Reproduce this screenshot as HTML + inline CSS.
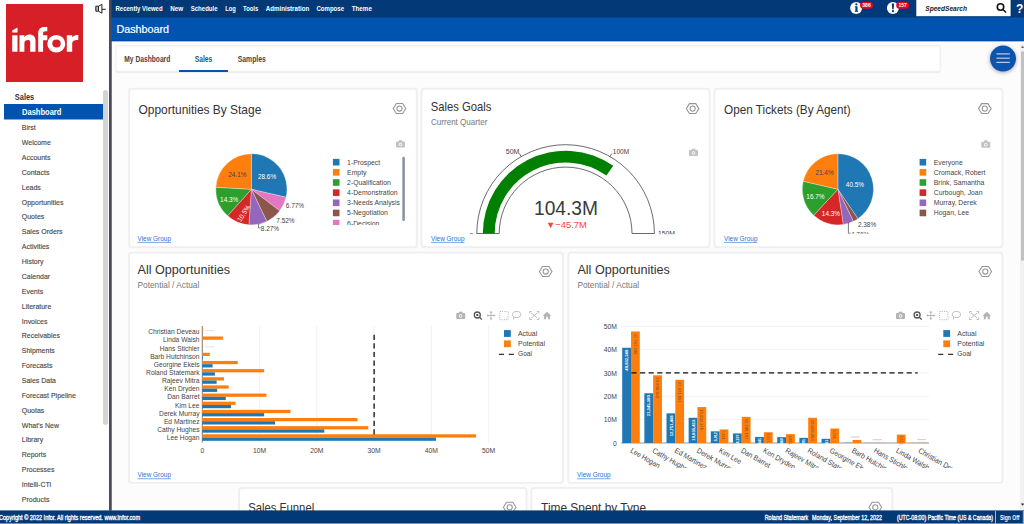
<!DOCTYPE html>
<html><head><meta charset="utf-8"><title>Dashboard</title>
<style>html,body{margin:0;padding:0;width:1024px;height:524px;overflow:hidden;background:#fcfcfc}
svg{display:block} text{font-family:"Liberation Sans", sans-serif}</style></head>
<body><svg width="1024" height="524" viewBox="0 0 1024 524" font-family='"Liberation Sans", sans-serif'>
<rect x="0" y="0" width="1024" height="524" fill="#fcfcfc" />
<rect x="0" y="0" width="109" height="510" fill="#ffffff" />
<rect x="6" y="4" width="77" height="78" fill="#d61f26" />
<g fill="#fff"><path d="M12.2,30.4 L17.5,27.5 V32.6 H12.2 Z"/><rect x="12.2" y="35.3" width="5.3" height="16.4"/><path d="M19.5,51.7 V35.3 H24.4 V37.2 C25.5,35.6 27.3,34.6 29.5,34.6 C33.2,34.6 35.5,36.8 35.5,40.8 V51.7 H30.2 V42 C30.2,40.8 29.4,40.1 28.1,40.1 C26,40.1 24.4,41.2 24.4,43 V51.7 Z"/><path d="M38.2,51.7 V33.2 C38.2,29 40.6,26.9 44.2,26.9 H47.3 V31.3 H45.2 C43.8,31.3 43.1,32 43.1,33.4 V35.3 H47.3 V40.2 H43.1 V51.7 Z"/><path fill-rule="evenodd" d="M56.3,34.9 A9,8.8 0 1 1 56.3,52.5 A9,8.8 0 1 1 56.3,34.9 Z M56.5,39.5 A4.2,4 0 1 0 56.5,47.5 A4.2,4 0 1 0 56.5,39.5 Z"/><path d="M66.8,51.7 V35.3 H72.2 V37.3 C73.2,35.8 75,34.9 77.2,34.9 H78.3 V39.9 H77 C74,39.9 72.2,41.2 72.2,43.6 V51.7 Z"/></g>
<g stroke="#222" stroke-width="1" stroke-linejoin="round"><rect x="95.8" y="6.2" width="2.7" height="5" fill="#bbb"/><path d="M98.5,6.2 L101.9,4.3 V13.2 L98.5,11.2 Z" fill="#fff"/><path d="M102,9.3 H105.8"/></g>
<text x="14.80" y="99.50" font-size="8.3" fill="#333" font-weight="bold" textLength="19.40" lengthAdjust="spacingAndGlyphs" >Sales</text>
<rect x="4" y="104" width="99" height="15.5" fill="#0054b0" />
<text x="22.00" y="115.10" font-size="8.3" fill="#ffffff" font-weight="bold" textLength="39.40" lengthAdjust="spacingAndGlyphs" >Dashboard</text>
<text x="21.80" y="130.20" font-size="7.9" fill="#4a4a4a" textLength="13.98" lengthAdjust="spacingAndGlyphs" stroke="#4a4a4a" stroke-width="0.15">Birst</text>
<text x="21.80" y="145.07" font-size="7.9" fill="#4a4a4a" textLength="29.01" lengthAdjust="spacingAndGlyphs" stroke="#4a4a4a" stroke-width="0.15">Welcome</text>
<text x="21.80" y="159.94" font-size="7.9" fill="#4a4a4a" textLength="28.76" lengthAdjust="spacingAndGlyphs" stroke="#4a4a4a" stroke-width="0.15">Accounts</text>
<text x="21.80" y="174.81" font-size="7.9" fill="#4a4a4a" textLength="27.59" lengthAdjust="spacingAndGlyphs" stroke="#4a4a4a" stroke-width="0.15">Contacts</text>
<text x="21.80" y="189.68" font-size="7.9" fill="#4a4a4a" textLength="19.05" lengthAdjust="spacingAndGlyphs" stroke="#4a4a4a" stroke-width="0.15">Leads</text>
<text x="21.80" y="204.55" font-size="7.9" fill="#4a4a4a" textLength="41.59" lengthAdjust="spacingAndGlyphs" stroke="#4a4a4a" stroke-width="0.15">Opportunities</text>
<text x="21.80" y="219.42" font-size="7.9" fill="#4a4a4a" textLength="22.54" lengthAdjust="spacingAndGlyphs" stroke="#4a4a4a" stroke-width="0.15">Quotes</text>
<text x="21.80" y="234.29" font-size="7.9" fill="#4a4a4a" textLength="40.80" lengthAdjust="spacingAndGlyphs" stroke="#4a4a4a" stroke-width="0.15">Sales Orders</text>
<text x="21.80" y="249.16" font-size="7.9" fill="#4a4a4a" textLength="27.58" lengthAdjust="spacingAndGlyphs" stroke="#4a4a4a" stroke-width="0.15">Activities</text>
<text x="21.80" y="264.03" font-size="7.9" fill="#4a4a4a" textLength="21.75" lengthAdjust="spacingAndGlyphs" stroke="#4a4a4a" stroke-width="0.15">History</text>
<text x="21.80" y="278.90" font-size="7.9" fill="#4a4a4a" textLength="28.37" lengthAdjust="spacingAndGlyphs" stroke="#4a4a4a" stroke-width="0.15">Calendar</text>
<text x="21.80" y="293.77" font-size="7.9" fill="#4a4a4a" textLength="21.37" lengthAdjust="spacingAndGlyphs" stroke="#4a4a4a" stroke-width="0.15">Events</text>
<text x="21.80" y="308.64" font-size="7.9" fill="#4a4a4a" textLength="29.54" lengthAdjust="spacingAndGlyphs" stroke="#4a4a4a" stroke-width="0.15">Literature</text>
<text x="21.80" y="323.51" font-size="7.9" fill="#4a4a4a" textLength="25.65" lengthAdjust="spacingAndGlyphs" stroke="#4a4a4a" stroke-width="0.15">Invoices</text>
<text x="21.80" y="338.38" font-size="7.9" fill="#4a4a4a" textLength="38.08" lengthAdjust="spacingAndGlyphs" stroke="#4a4a4a" stroke-width="0.15">Receivables</text>
<text x="21.80" y="353.25" font-size="7.9" fill="#4a4a4a" textLength="33.03" lengthAdjust="spacingAndGlyphs" stroke="#4a4a4a" stroke-width="0.15">Shipments</text>
<text x="21.80" y="368.12" font-size="7.9" fill="#4a4a4a" textLength="30.69" lengthAdjust="spacingAndGlyphs" stroke="#4a4a4a" stroke-width="0.15">Forecasts</text>
<text x="21.80" y="382.99" font-size="7.9" fill="#4a4a4a" textLength="34.20" lengthAdjust="spacingAndGlyphs" stroke="#4a4a4a" stroke-width="0.15">Sales Data</text>
<text x="21.80" y="397.86" font-size="7.9" fill="#4a4a4a" textLength="54.02" lengthAdjust="spacingAndGlyphs" stroke="#4a4a4a" stroke-width="0.15">Forecast Pipeline</text>
<text x="21.80" y="412.73" font-size="7.9" fill="#4a4a4a" textLength="22.54" lengthAdjust="spacingAndGlyphs" stroke="#4a4a4a" stroke-width="0.15">Quotas</text>
<text x="21.80" y="427.60" font-size="7.9" fill="#4a4a4a" textLength="37.17" lengthAdjust="spacingAndGlyphs" stroke="#4a4a4a" stroke-width="0.15">What’s New</text>
<text x="21.80" y="442.47" font-size="7.9" fill="#4a4a4a" textLength="21.37" lengthAdjust="spacingAndGlyphs" stroke="#4a4a4a" stroke-width="0.15">Library</text>
<text x="21.80" y="457.34" font-size="7.9" fill="#4a4a4a" textLength="24.48" lengthAdjust="spacingAndGlyphs" stroke="#4a4a4a" stroke-width="0.15">Reports</text>
<text x="21.80" y="472.21" font-size="7.9" fill="#4a4a4a" textLength="32.64" lengthAdjust="spacingAndGlyphs" stroke="#4a4a4a" stroke-width="0.15">Processes</text>
<text x="21.80" y="487.08" font-size="7.9" fill="#4a4a4a" textLength="29.26" lengthAdjust="spacingAndGlyphs" stroke="#4a4a4a" stroke-width="0.15">Intelli-CTi</text>
<text x="21.80" y="501.95" font-size="7.9" fill="#4a4a4a" textLength="27.59" lengthAdjust="spacingAndGlyphs" stroke="#4a4a4a" stroke-width="0.15">Products</text>
<rect x="103" y="90" width="5" height="335" rx="2.5" fill="#d4d4d4"/>
<rect x="109" y="0" width="2.5" height="510.4" fill="#4b4b55" />
<rect x="110" y="0" width="914" height="41.2" fill="#0054b0" />
<rect x="110" y="0" width="914" height="17.5" fill="#033977" />
<text x="115.50" y="10.90" font-size="7.4" fill="#ffffff" font-weight="bold" textLength="47.10" lengthAdjust="spacingAndGlyphs" >Recently Viewed</text>
<text x="170.20" y="10.90" font-size="7.4" fill="#ffffff" font-weight="bold" textLength="12.90" lengthAdjust="spacingAndGlyphs" >New</text>
<text x="190.70" y="10.90" font-size="7.4" fill="#ffffff" font-weight="bold" textLength="26.90" lengthAdjust="spacingAndGlyphs" >Schedule</text>
<text x="225.30" y="10.90" font-size="7.4" fill="#ffffff" font-weight="bold" textLength="10.50" lengthAdjust="spacingAndGlyphs" >Log</text>
<text x="243.00" y="10.90" font-size="7.4" fill="#ffffff" font-weight="bold" textLength="15.20" lengthAdjust="spacingAndGlyphs" >Tools</text>
<text x="265.80" y="10.90" font-size="7.4" fill="#ffffff" font-weight="bold" textLength="43.40" lengthAdjust="spacingAndGlyphs" >Administration</text>
<text x="316.50" y="10.90" font-size="7.4" fill="#ffffff" font-weight="bold" textLength="27.50" lengthAdjust="spacingAndGlyphs" >Compose</text>
<text x="351.70" y="10.90" font-size="7.4" fill="#ffffff" font-weight="bold" textLength="20.20" lengthAdjust="spacingAndGlyphs" >Theme</text>
<rect x="110" y="40.2" width="914" height="1" fill="#0046a8" />
<rect x="109" y="0" width="2.5" height="510.4" fill="#4b4b55" />
<text x="116.50" y="33.40" font-size="11.6" fill="#ffffff" textLength="52.60" lengthAdjust="spacingAndGlyphs" stroke="#fff" stroke-width="0.2">Dashboard</text>
<circle cx="856.15" cy="7.95" r="6" fill="#fff"/>
<g fill="#033977"><circle cx="856.4" cy="4.3" r="1.15"/><path d="M854.9,6.3 H857.5 V10.7 H858.1 V11.8 H854.8 V10.7 H855.4 V7.3 H854.9 Z"/></g>
<rect x="860.1" y="2.1" width="12.8" height="6.6" rx="3.3" fill="#e3061f"/>
<text x="866.50" y="7.30" font-size="5.3" fill="#fff" font-weight="bold" text-anchor="middle" textLength="8.50" lengthAdjust="spacingAndGlyphs" >386</text>
<circle cx="892.9" cy="7.95" r="6" fill="#fff"/>
<g fill="#033977"><path d="M891.8,3.6 H894.1 L893.7,9.3 H892.2 Z"/><circle cx="892.95" cy="11.2" r="1.15"/></g>
<rect x="896.25" y="2.1" width="12.85" height="6.6" rx="3.3" fill="#e3061f"/>
<text x="902.70" y="7.30" font-size="5.3" fill="#fff" font-weight="bold" text-anchor="middle" textLength="8.30" lengthAdjust="spacingAndGlyphs" >157</text>
<rect x="916.3" y="0" width="94.3" height="16.2" fill="#ffffff" />
<text x="925.30" y="11.00" font-size="7.6" fill="#222" font-weight="bold" font-style="italic" textLength="41.70" lengthAdjust="spacingAndGlyphs" >SpeedSearch</text>
<g fill="none" stroke="#111" stroke-width="1.6"><circle cx="1000.5" cy="7" r="3.2"/><path d="M1003 9.5 L1006 12.5"/></g>
<text x="1016.00" y="12.50" font-size="12" fill="#fff" font-weight="bold" >?</text>
<rect x="116.5" y="70.6" width="823.5" height="1.8" rx="0.9" fill="#e0e0e0"/>
<rect x="115.8" y="45.6" width="824.5" height="25.8" rx="2" fill="#fff" stroke="#efefef" stroke-width="1.2"/>
<text x="124.30" y="61.50" font-size="8.3" fill="#444" font-weight="bold" textLength="46.00" lengthAdjust="spacingAndGlyphs" >My Dashboard</text>
<text x="194.70" y="61.50" font-size="8.3" fill="#1d4f9f" font-weight="bold" textLength="17.50" lengthAdjust="spacingAndGlyphs" >Sales</text>
<text x="237.80" y="61.50" font-size="8.3" fill="#444" font-weight="bold" textLength="28.00" lengthAdjust="spacingAndGlyphs" >Samples</text>
<rect x="179" y="70" width="49" height="2" fill="#0054b0" />
<circle cx="1003" cy="58.6" r="13" fill="#0a54b0" style="filter:drop-shadow(0 1px 2px rgba(0,0,0,.35))"/>
<rect x="996.4" y="53.3" width="13.4" height="1.2" fill="#b9cdef" />
<rect x="996.4" y="57.6" width="13.4" height="1.2" fill="#b9cdef" />
<rect x="996.4" y="61.8" width="13.4" height="1.2" fill="#b9cdef" />
<rect x="1020" y="43" width="4" height="467" fill="#f1f1f1" />
<rect x="1021" y="51.5" width="3" height="209" fill="#c1c1c1" />
<path d="M1020.8,48 L1022.6,45.8 L1024.4,48 Z" fill="#777"/><path d="M1020.8,503.6 L1022.6,505.8 L1024.4,503.6 Z" fill="#333"/>
<rect x="129.1" y="88.8" width="287.70000000000005" height="158.39999999999998" rx="3" fill="#fff" stroke="#efefef" stroke-width="1.9"/>
<text x="138.50" y="113.60" font-size="13" fill="#333" textLength="122.80" lengthAdjust="spacingAndGlyphs" >Opportunities By Stage</text>
<polygon points="405.80,108.50 402.65,113.48 396.35,113.48 393.20,108.50 396.35,103.52 402.65,103.52" fill="none" stroke="#959595" stroke-width="1.05"/>
<circle cx="399.5" cy="108.5" r="2.6" fill="none" stroke="#959595" stroke-width="1.05"/>
<g fill="#c2c2c2"><rect x="396.0" y="141.5" width="9" height="6" rx="1"/><rect x="398.7" y="140.2" width="3.6" height="2"/></g><circle cx="400.5" cy="144.5" r="1.8" fill="#fff"/><circle cx="400.5" cy="144.5" r="1" fill="#c2c2c2"/>
<path d="M251.4,189.3 L251.40,153.70 A35.6,35.6 0 0 1 286.10,197.25 Z" fill="#1f77b4" stroke="#fff" stroke-width="0.3"/>
<path d="M251.4,189.3 L286.10,197.25 A35.6,35.6 0 0 1 279.74,210.85 Z" fill="#e377c2" stroke="#fff" stroke-width="0.3"/>
<path d="M251.4,189.3 L279.74,210.85 A35.6,35.6 0 0 1 266.83,221.38 Z" fill="#8c564b" stroke="#fff" stroke-width="0.3"/>
<path d="M251.4,189.3 L266.83,221.38 A35.6,35.6 0 0 1 248.88,224.81 Z" fill="#9467bd" stroke="#fff" stroke-width="0.3"/>
<path d="M251.4,189.3 L248.88,224.81 A35.6,35.6 0 0 1 227.65,215.82 Z" fill="#d62728" stroke="#fff" stroke-width="0.3"/>
<path d="M251.4,189.3 L227.65,215.82 A35.6,35.6 0 0 1 215.86,187.26 Z" fill="#2ca02c" stroke="#fff" stroke-width="0.3"/>
<path d="M251.4,189.3 L215.86,187.26 A35.6,35.6 0 0 1 251.40,153.70 Z" fill="#ff7f0e" stroke="#fff" stroke-width="0.3"/>
<text x="257.90" y="179.40" font-size="7" fill="#fff" textLength="18.26" lengthAdjust="spacingAndGlyphs" >28.6%</text>
<text x="228.20" y="177.00" font-size="7" fill="#444" textLength="18.26" lengthAdjust="spacingAndGlyphs" >24.1%</text>
<text x="220.10" y="201.70" font-size="7" fill="#fff" textLength="18.26" lengthAdjust="spacingAndGlyphs" >14.3%</text>
<g transform="translate(243.7,213.3) rotate(-57)">
<text x="0.00" y="2.40" font-size="7" fill="#fff" text-anchor="middle" textLength="18.26" lengthAdjust="spacingAndGlyphs" >10.5%</text>
</g>
<text x="285.80" y="208.20" font-size="7" fill="#444" textLength="18.26" lengthAdjust="spacingAndGlyphs" >6.77%</text>
<text x="276.30" y="222.50" font-size="7" fill="#444" textLength="18.26" lengthAdjust="spacingAndGlyphs" >7.52%</text>
<text x="260.80" y="231.40" font-size="7" fill="#444" textLength="18.26" lengthAdjust="spacingAndGlyphs" >8.27%</text>
<path d="M258.6 223.9 V227.9 H260.5" fill="none" stroke="#444" stroke-width="0.7"/>
<clipPath id="lc1"><rect x="325" y="150" width="90" height="75.1"/></clipPath><g clip-path="url(#lc1)">
<rect x="332.9" y="158.89999999999998" width="6.6" height="6.6" fill="#1f77b4" />
<text x="347.10" y="164.70" font-size="7.2" fill="#444" textLength="33.08" lengthAdjust="spacingAndGlyphs" >1-Prospect</text>
<rect x="332.9" y="169.04999999999998" width="6.6" height="6.6" fill="#ff7f0e" />
<text x="347.10" y="174.85" font-size="7.2" fill="#444" textLength="19.39" lengthAdjust="spacingAndGlyphs" >Empty</text>
<rect x="332.9" y="179.2" width="6.6" height="6.6" fill="#2ca02c" />
<text x="347.10" y="185.00" font-size="7.2" fill="#444" textLength="43.73" lengthAdjust="spacingAndGlyphs" >2-Qualification</text>
<rect x="332.9" y="189.34999999999997" width="6.6" height="6.6" fill="#d62728" />
<text x="347.10" y="195.15" font-size="7.2" fill="#444" textLength="50.57" lengthAdjust="spacingAndGlyphs" >4-Demonstration</text>
<rect x="332.9" y="199.49999999999997" width="6.6" height="6.6" fill="#9467bd" />
<text x="347.10" y="205.30" font-size="7.2" fill="#444" textLength="52.85" lengthAdjust="spacingAndGlyphs" >3-Needs Analysis</text>
<rect x="332.9" y="209.64999999999998" width="6.6" height="6.6" fill="#8c564b" />
<text x="347.10" y="215.45" font-size="7.2" fill="#444" textLength="40.69" lengthAdjust="spacingAndGlyphs" >5-Negotiation</text>
<rect x="332.9" y="219.79999999999998" width="6.6" height="6.6" fill="#e377c2" />
<text x="347.10" y="225.60" font-size="7.2" fill="#444" textLength="32.32" lengthAdjust="spacingAndGlyphs" >6-Decision</text>
</g>
<rect x="402.3" y="156.8" width="2.6" height="64.2" rx="1.3" fill="#8a92a6"/>
<text x="137.50" y="240.70" font-size="6.8" fill="#2f6fd0" textLength="33.50" lengthAdjust="spacingAndGlyphs" >View Group</text>
<rect x="137.5" y="241.89999999999998" width="33.5" height="0.8" fill="#5b8fe0" />
<rect x="421.4" y="88.8" width="288.1" height="158.39999999999998" rx="3" fill="#fff" stroke="#efefef" stroke-width="1.9"/>
<text x="430.70" y="111.00" font-size="13" fill="#333" textLength="60.80" lengthAdjust="spacingAndGlyphs" >Sales Goals</text>
<text x="431.00" y="125.00" font-size="8.4" fill="#777" textLength="56.40" lengthAdjust="spacingAndGlyphs" >Current Quarter</text>
<polygon points="698.90,108.60 695.75,113.58 689.45,113.58 686.30,108.60 689.45,103.62 695.75,103.62" fill="none" stroke="#959595" stroke-width="1.05"/>
<circle cx="692.6" cy="108.6" r="2.6" fill="none" stroke="#959595" stroke-width="1.05"/>
<g fill="#c2c2c2"><rect x="689.0" y="150.0" width="9" height="6" rx="1"/><rect x="691.7" y="148.7" width="3.6" height="2"/></g><circle cx="693.5" cy="153.0" r="1.8" fill="#fff"/><circle cx="693.5" cy="153.0" r="1" fill="#c2c2c2"/>
<clipPath id="gc"><rect x="421" y="130" width="289" height="104.3"/></clipPath><g clip-path="url(#gc)">
<path d="M476.8,233.5 A88.8,88.8 0 0 1 654.4,233.5 L632.0,233.5 A66.4,66.4 0 0 0 499.20000000000005,233.5 Z" fill="#fff" stroke="#444" stroke-width="0.8"/>
<path d="M482.8,233.5 A82.8,82.8 0 0 1 613.28,165.81 L606.43,175.54 A70.9,70.9 0 0 0 494.70000000000005,233.5 Z" fill="#008000"/>
<line x1="521.20" y1="156.60" x2="519.45" y2="153.57" stroke="#444" stroke-width="0.8"/>
<line x1="610.00" y1="156.60" x2="611.75" y2="153.57" stroke="#444" stroke-width="0.8"/>
<text x="505.80" y="153.70" font-size="6.8" fill="#444" textLength="13.70" lengthAdjust="spacingAndGlyphs" >50M</text>
<text x="612.80" y="153.70" font-size="6.8" fill="#444" textLength="16.40" lengthAdjust="spacingAndGlyphs" >100M</text>
<text x="469.50" y="237.60" font-size="6.8" fill="#444" >0</text>
<text x="658.00" y="236.40" font-size="6.8" fill="#444" textLength="17.00" lengthAdjust="spacingAndGlyphs" >150M</text>
</g>
<text x="534.00" y="215.30" font-size="20.5" fill="#3a3a3a" textLength="64.00" lengthAdjust="spacingAndGlyphs" >104.3M</text>
<text x="546.00" y="227.80" font-size="9.4" fill="#ff4136" textLength="40.80" lengthAdjust="spacingAndGlyphs" >▼−45.7M</text>
<text x="431.00" y="240.70" font-size="6.8" fill="#2f6fd0" textLength="33.50" lengthAdjust="spacingAndGlyphs" >View Group</text>
<rect x="431" y="241.89999999999998" width="33.5" height="0.8" fill="#5b8fe0" />
<rect x="714.5" y="88.8" width="288.0" height="158.39999999999998" rx="3" fill="#fff" stroke="#efefef" stroke-width="1.9"/>
<text x="724.00" y="113.60" font-size="13" fill="#333" textLength="126.80" lengthAdjust="spacingAndGlyphs" >Open Tickets (By Agent)</text>
<polygon points="991.10,108.60 987.95,113.58 981.65,113.58 978.50,108.60 981.65,103.62 987.95,103.62" fill="none" stroke="#959595" stroke-width="1.05"/>
<circle cx="984.8" cy="108.6" r="2.6" fill="none" stroke="#959595" stroke-width="1.05"/>
<g fill="#c2c2c2"><rect x="981.3" y="141.7" width="9" height="6" rx="1"/><rect x="984.0" y="140.39999999999998" width="3.6" height="2"/></g><circle cx="985.8" cy="144.7" r="1.8" fill="#fff"/><circle cx="985.8" cy="144.7" r="1" fill="#c2c2c2"/>
<path d="M837.9,189.25 L837.90,153.65 A35.6,35.6 0 0 1 857.94,218.67 Z" fill="#1f77b4" stroke="#fff" stroke-width="0.3"/>
<path d="M837.9,189.25 L857.94,218.67 A35.6,35.6 0 0 1 853.33,221.33 Z" fill="#8c564b" stroke="#fff" stroke-width="0.3"/>
<path d="M837.9,189.25 L853.33,221.33 A35.6,35.6 0 0 1 843.20,224.45 Z" fill="#9467bd" stroke="#fff" stroke-width="0.3"/>
<path d="M837.9,189.25 L843.20,224.45 A35.6,35.6 0 0 1 813.67,215.33 Z" fill="#d62728" stroke="#fff" stroke-width="0.3"/>
<path d="M837.9,189.25 L813.67,215.33 A35.6,35.6 0 0 1 803.21,181.25 Z" fill="#2ca02c" stroke="#fff" stroke-width="0.3"/>
<path d="M837.9,189.25 L803.21,181.25 A35.6,35.6 0 0 1 837.90,153.65 Z" fill="#ff7f0e" stroke="#fff" stroke-width="0.3"/>
<text x="845.80" y="187.30" font-size="7" fill="#fff" textLength="18.26" lengthAdjust="spacingAndGlyphs" >40.5%</text>
<text x="815.40" y="174.70" font-size="7" fill="#444" textLength="18.26" lengthAdjust="spacingAndGlyphs" >21.4%</text>
<text x="806.30" y="198.80" font-size="7" fill="#fff" textLength="18.26" lengthAdjust="spacingAndGlyphs" >16.7%</text>
<text x="821.80" y="216.00" font-size="7" fill="#fff" textLength="18.26" lengthAdjust="spacingAndGlyphs" >14.3%</text>
<text x="857.90" y="226.60" font-size="7" fill="#444" textLength="18.26" lengthAdjust="spacingAndGlyphs" >2.38%</text>
<clipPath id="pc3"><rect x="715" y="130" width="287" height="103.8"/></clipPath><g clip-path="url(#pc3)">
<text x="851.00" y="236.90" font-size="7" fill="#444" textLength="18.26" lengthAdjust="spacingAndGlyphs" >4.76%</text>
<path d="M848.4 222.5 V233.3 H850.5" fill="none" stroke="#444" stroke-width="0.7"/>
</g>
<rect x="919.6" y="158.89999999999998" width="6.6" height="6.6" fill="#1f77b4" />
<text x="933.80" y="164.70" font-size="7.2" fill="#444" textLength="28.90" lengthAdjust="spacingAndGlyphs" >Everyone</text>
<rect x="919.6" y="169.04999999999998" width="6.6" height="6.6" fill="#ff7f0e" />
<text x="933.80" y="174.85" font-size="7.2" fill="#444" textLength="51.70" lengthAdjust="spacingAndGlyphs" >Cromack, Robert</text>
<rect x="919.6" y="179.2" width="6.6" height="6.6" fill="#2ca02c" />
<text x="933.80" y="185.00" font-size="7.2" fill="#444" textLength="50.57" lengthAdjust="spacingAndGlyphs" >Brink, Samantha</text>
<rect x="919.6" y="189.34999999999997" width="6.6" height="6.6" fill="#d62728" />
<text x="933.80" y="195.15" font-size="7.2" fill="#444" textLength="48.68" lengthAdjust="spacingAndGlyphs" >Curbough, Joan</text>
<rect x="919.6" y="199.49999999999997" width="6.6" height="6.6" fill="#9467bd" />
<text x="933.80" y="205.30" font-size="7.2" fill="#444" textLength="42.82" lengthAdjust="spacingAndGlyphs" >Murray, Derek</text>
<rect x="919.6" y="209.64999999999998" width="6.6" height="6.6" fill="#8c564b" />
<text x="933.80" y="215.45" font-size="7.2" fill="#444" textLength="35.37" lengthAdjust="spacingAndGlyphs" >Hogan, Lee</text>
<text x="724.00" y="240.70" font-size="6.8" fill="#2f6fd0" textLength="33.50" lengthAdjust="spacingAndGlyphs" >View Group</text>
<rect x="724" y="241.89999999999998" width="33.5" height="0.8" fill="#5b8fe0" />
<rect x="129.0" y="252.5" width="434.0" height="230.39999999999998" rx="3" fill="#fff" stroke="#efefef" stroke-width="1.9"/>
<text x="137.50" y="273.90" font-size="13" fill="#333" textLength="92.50" lengthAdjust="spacingAndGlyphs" >All Opportunities</text>
<text x="137.50" y="288.30" font-size="8.4" fill="#777" textLength="61.80" lengthAdjust="spacingAndGlyphs" >Potential / Actual</text>
<polygon points="552.00,271.50 548.85,276.48 542.55,276.48 539.40,271.50 542.55,266.52 548.85,266.52" fill="none" stroke="#959595" stroke-width="1.05"/>
<circle cx="545.7" cy="271.5" r="2.6" fill="none" stroke="#959595" stroke-width="1.05"/>
<text x="137.50" y="477.20" font-size="6.8" fill="#2f6fd0" textLength="33.50" lengthAdjust="spacingAndGlyphs" >View Group</text>
<rect x="137.5" y="478.4" width="33.5" height="0.8" fill="#5b8fe0" />
<g fill="#b4b4b4"><rect x="456.2" y="313.0" width="9" height="6" rx="1"/><rect x="458.9" y="311.7" width="3.6" height="2"/></g><circle cx="460.7" cy="316.0" r="1.8" fill="#fff"/><circle cx="460.7" cy="316.0" r="1" fill="#b4b4b4"/>
<g fill="none" stroke="#555" stroke-width="1.3"><circle cx="477.3" cy="315.0" r="3"/><path d="M479.5,317.2 L481.90000000000003,319.6"/></g><rect x="476.3" y="314.0" width="2" height="2" fill="#555"/>
<g fill="none" stroke="#b4b4b4" stroke-width="0.9"><path d="M487,315.5 H495 M491,311.5 V319.5"/></g><g fill="#b4b4b4"><path d="M486.5,315.5 l1.8,-1.5 v3 Z M495.5,315.5 l-1.8,-1.5 v3 Z M491,311.0 l-1.5,1.8 h3 Z M491,320.0 l-1.5,-1.8 h3 Z"/></g>
<rect x="499.8" y="311.5" width="8.4" height="8.2" fill="none" stroke="#b4b4b4" stroke-width="0.9" stroke-dasharray="1.1 1.1"/>
<g fill="none" stroke="#b4b4b4" stroke-width="0.9"><ellipse cx="516.6" cy="314.5" rx="4.1" ry="3"/><path d="M514.1,317.0 L513.4,319.5"/></g>
<g fill="none" stroke="#b4b4b4" stroke-width="0.9"><path d="M529.8,313.5 V311.5 H531.8 M536.8,311.5 H538.8 V313.5 M538.8,317.5 V319.5 H536.8 M531.8,319.5 H529.8 V317.5"/><path d="M531.3,313.0 L537.3,318.0 M537.3,313.0 L531.3,318.0"/></g>
<path d="M542.7,315.8 L547,311.7 L551.3,315.8 H550 V319.3 H547.9 V316.8 H546.1 V319.3 H544 V315.8 Z" fill="#b4b4b4"/>
<line x1="259.6" y1="326" x2="259.6" y2="442.5" stroke="#eee" stroke-width="0.8"/>
<line x1="316.8" y1="326" x2="316.8" y2="442.5" stroke="#eee" stroke-width="0.8"/>
<line x1="374.1" y1="326" x2="374.1" y2="442.5" stroke="#eee" stroke-width="0.8"/>
<line x1="431.4" y1="326" x2="431.4" y2="442.5" stroke="#eee" stroke-width="0.8"/>
<line x1="488.7" y1="326" x2="488.7" y2="442.5" stroke="#eee" stroke-width="0.8"/>
<line x1="202.3" y1="325.9" x2="202.3" y2="442.5" stroke="#444" stroke-width="0.7"/>
<rect x="202.3" y="328.34" width="0.86" height="3.26" fill="#ff7f0e"/>
<rect x="202.3" y="331.60" width="0.17" height="3.26" fill="#1f77b4"/>
<text x="199.50" y="334.20" font-size="7.5" fill="#444" text-anchor="end" textLength="51.20" lengthAdjust="spacingAndGlyphs" >Christian Deveau</text>
<rect x="202.3" y="336.49" width="20.62" height="3.26" fill="#ff7f0e"/>
<rect x="202.3" y="339.75" width="0.00" height="3.26" fill="#1f77b4"/>
<text x="199.50" y="342.35" font-size="7.5" fill="#444" text-anchor="end" textLength="36.49" lengthAdjust="spacingAndGlyphs" >Linda Walsh</text>
<rect x="202.3" y="344.64" width="0.57" height="3.26" fill="#ff7f0e"/>
<rect x="202.3" y="347.90" width="0.17" height="3.26" fill="#1f77b4"/>
<text x="199.50" y="350.50" font-size="7.5" fill="#444" text-anchor="end" textLength="39.70" lengthAdjust="spacingAndGlyphs" >Hans Stichler</text>
<rect x="202.3" y="352.79" width="7.45" height="3.26" fill="#ff7f0e"/>
<rect x="202.3" y="356.05" width="0.57" height="3.26" fill="#1f77b4"/>
<text x="199.50" y="358.65" font-size="7.5" fill="#444" text-anchor="end" textLength="49.35" lengthAdjust="spacingAndGlyphs" >Barb Hutchinson</text>
<rect x="202.3" y="360.94" width="35.51" height="3.26" fill="#ff7f0e"/>
<rect x="202.3" y="364.20" width="10.31" height="3.26" fill="#1f77b4"/>
<text x="199.50" y="366.80" font-size="7.5" fill="#444" text-anchor="end" textLength="45.64" lengthAdjust="spacingAndGlyphs" >Georgine Ekels</text>
<rect x="202.3" y="369.09" width="61.85" height="3.26" fill="#ff7f0e"/>
<rect x="202.3" y="372.35" width="12.60" height="3.26" fill="#1f77b4"/>
<text x="199.50" y="374.95" font-size="7.5" fill="#444" text-anchor="end" textLength="53.43" lengthAdjust="spacingAndGlyphs" >Roland Statemark</text>
<rect x="202.3" y="377.24" width="21.76" height="3.26" fill="#ff7f0e"/>
<rect x="202.3" y="380.50" width="14.32" height="3.26" fill="#1f77b4"/>
<text x="199.50" y="383.10" font-size="7.5" fill="#444" text-anchor="end" textLength="37.47" lengthAdjust="spacingAndGlyphs" >Rajeev Mitra</text>
<rect x="202.3" y="385.39" width="26.34" height="3.26" fill="#ff7f0e"/>
<rect x="202.3" y="388.65" width="14.89" height="3.26" fill="#1f77b4"/>
<text x="199.50" y="391.25" font-size="7.5" fill="#444" text-anchor="end" textLength="35.25" lengthAdjust="spacingAndGlyphs" >Ken Dryden</text>
<rect x="202.3" y="393.54" width="64.14" height="3.26" fill="#ff7f0e"/>
<rect x="202.3" y="396.80" width="23.48" height="3.26" fill="#1f77b4"/>
<text x="199.50" y="399.40" font-size="7.5" fill="#444" text-anchor="end" textLength="32.28" lengthAdjust="spacingAndGlyphs" >Dan Barret</text>
<rect x="202.3" y="401.69" width="33.22" height="3.26" fill="#ff7f0e"/>
<rect x="202.3" y="404.95" width="28.64" height="3.26" fill="#1f77b4"/>
<text x="199.50" y="407.55" font-size="7.5" fill="#444" text-anchor="end" textLength="24.49" lengthAdjust="spacingAndGlyphs" >Kim Lee</text>
<rect x="202.3" y="409.84" width="88.20" height="3.26" fill="#ff7f0e"/>
<rect x="202.3" y="413.10" width="61.85" height="3.26" fill="#1f77b4"/>
<text x="199.50" y="415.70" font-size="7.5" fill="#444" text-anchor="end" textLength="40.43" lengthAdjust="spacingAndGlyphs" >Derek Murray</text>
<rect x="202.3" y="417.99" width="155.20" height="3.26" fill="#ff7f0e"/>
<rect x="202.3" y="421.25" width="72.73" height="3.26" fill="#1f77b4"/>
<text x="199.50" y="423.85" font-size="7.5" fill="#444" text-anchor="end" textLength="35.62" lengthAdjust="spacingAndGlyphs" >Ed Martinez</text>
<rect x="202.3" y="426.14" width="166.08" height="3.26" fill="#ff7f0e"/>
<rect x="202.3" y="429.40" width="121.99" height="3.26" fill="#1f77b4"/>
<text x="199.50" y="432.00" font-size="7.5" fill="#444" text-anchor="end" textLength="42.30" lengthAdjust="spacingAndGlyphs" >Cathy Hughes</text>
<rect x="202.3" y="434.29" width="273.75" height="3.26" fill="#ff7f0e"/>
<rect x="202.3" y="437.55" width="233.66" height="3.26" fill="#1f77b4"/>
<text x="199.50" y="440.15" font-size="7.5" fill="#444" text-anchor="end" textLength="32.67" lengthAdjust="spacingAndGlyphs" >Lee Hogan</text>
<rect x="205.3" y="330.0" width="9" height="1" fill="#e2e2e2"/>
<rect x="205.3" y="346.3" width="9" height="1" fill="#e2e2e2"/>
<line x1="374.1" y1="334.7" x2="374.1" y2="438" stroke="#111" stroke-width="1.3" stroke-dasharray="5.2 3.4"/>
<text x="202.30" y="452.90" font-size="7.5" fill="#444" text-anchor="middle" textLength="3.75" lengthAdjust="spacingAndGlyphs" >0</text>
<text x="259.57" y="452.90" font-size="7.5" fill="#444" text-anchor="middle" textLength="13.13" lengthAdjust="spacingAndGlyphs" >10M</text>
<text x="316.84" y="452.90" font-size="7.5" fill="#444" text-anchor="middle" textLength="13.13" lengthAdjust="spacingAndGlyphs" >20M</text>
<text x="374.11" y="452.90" font-size="7.5" fill="#444" text-anchor="middle" textLength="13.13" lengthAdjust="spacingAndGlyphs" >30M</text>
<text x="431.38" y="452.90" font-size="7.5" fill="#444" text-anchor="middle" textLength="13.13" lengthAdjust="spacingAndGlyphs" >40M</text>
<text x="488.65" y="452.90" font-size="7.5" fill="#444" text-anchor="middle" textLength="13.13" lengthAdjust="spacingAndGlyphs" >50M</text>
<rect x="504" y="330.1" width="6.8" height="6.8" fill="#1f77b4" />
<text x="518.00" y="335.90" font-size="7.5" fill="#444" textLength="19.20" lengthAdjust="spacingAndGlyphs" >Actual</text>
<rect x="504" y="340.4" width="6.8" height="6.8" fill="#ff7f0e" />
<text x="518.00" y="345.90" font-size="7.5" fill="#444" textLength="27.00" lengthAdjust="spacingAndGlyphs" >Potential</text>
<line x1="498.9" y1="354.4" x2="513.9" y2="354.4" stroke="#333" stroke-width="1.4" stroke-dasharray="5.1 4.8"/>
<text x="518.00" y="356.40" font-size="7.5" fill="#444" textLength="14.00" lengthAdjust="spacingAndGlyphs" >Goal</text>
<rect x="568.3" y="252.5" width="434.20000000000005" height="230.39999999999998" rx="3" fill="#fff" stroke="#efefef" stroke-width="1.9"/>
<text x="577.40" y="273.90" font-size="13" fill="#333" textLength="92.50" lengthAdjust="spacingAndGlyphs" >All Opportunities</text>
<text x="577.40" y="288.30" font-size="8.4" fill="#777" textLength="61.80" lengthAdjust="spacingAndGlyphs" >Potential / Actual</text>
<polygon points="991.60,271.50 988.45,276.48 982.15,276.48 979.00,271.50 982.15,266.52 988.45,266.52" fill="none" stroke="#959595" stroke-width="1.05"/>
<circle cx="985.3" cy="271.5" r="2.6" fill="none" stroke="#959595" stroke-width="1.05"/>
<text x="577.10" y="477.20" font-size="6.8" fill="#2f6fd0" textLength="33.50" lengthAdjust="spacingAndGlyphs" >View Group</text>
<rect x="577.1" y="478.4" width="33.5" height="0.8" fill="#5b8fe0" />
<g fill="#b4b4b4"><rect x="896.0" y="313.0" width="9" height="6" rx="1"/><rect x="898.7" y="311.7" width="3.6" height="2"/></g><circle cx="900.5" cy="316.0" r="1.8" fill="#fff"/><circle cx="900.5" cy="316.0" r="1" fill="#b4b4b4"/>
<g fill="none" stroke="#555" stroke-width="1.3"><circle cx="917.0999999999999" cy="315.0" r="3"/><path d="M919.3,317.2 L921.6999999999999,319.6"/></g><rect x="916.0999999999999" y="314.0" width="2" height="2" fill="#555"/>
<g fill="none" stroke="#b4b4b4" stroke-width="0.9"><path d="M926.8,315.5 H934.8 M930.8,311.5 V319.5"/></g><g fill="#b4b4b4"><path d="M926.3,315.5 l1.8,-1.5 v3 Z M935.3,315.5 l-1.8,-1.5 v3 Z M930.8,311.0 l-1.5,1.8 h3 Z M930.8,320.0 l-1.5,-1.8 h3 Z"/></g>
<rect x="939.5999999999999" y="311.5" width="8.4" height="8.2" fill="none" stroke="#b4b4b4" stroke-width="0.9" stroke-dasharray="1.1 1.1"/>
<g fill="none" stroke="#b4b4b4" stroke-width="0.9"><ellipse cx="956.4" cy="314.5" rx="4.1" ry="3"/><path d="M953.9,317.0 L953.1999999999999,319.5"/></g>
<g fill="none" stroke="#b4b4b4" stroke-width="0.9"><path d="M969.6,313.5 V311.5 H971.6 M976.6,311.5 H978.6 V313.5 M978.6,317.5 V319.5 H976.6 M971.6,319.5 H969.6 V317.5"/><path d="M971.1,313.0 L977.1,318.0 M977.1,313.0 L971.1,318.0"/></g>
<path d="M982.5,315.8 L986.8,311.7 L991.0999999999999,315.8 H989.8 V319.3 H987.6999999999999 V316.8 H985.9 V319.3 H983.8 V315.8 Z" fill="#b4b4b4"/>
<text x="616.80" y="445.60" font-size="7.5" fill="#444" text-anchor="end" textLength="3.75" lengthAdjust="spacingAndGlyphs" >0</text>
<line x1="621" y1="419.7" x2="929" y2="419.7" stroke="#eee" stroke-width="0.8"/>
<text x="616.80" y="422.26" font-size="7.5" fill="#444" text-anchor="end" textLength="13.13" lengthAdjust="spacingAndGlyphs" >10M</text>
<line x1="621" y1="396.3" x2="929" y2="396.3" stroke="#eee" stroke-width="0.8"/>
<text x="616.80" y="398.92" font-size="7.5" fill="#444" text-anchor="end" textLength="13.13" lengthAdjust="spacingAndGlyphs" >20M</text>
<line x1="621" y1="373.0" x2="929" y2="373.0" stroke="#eee" stroke-width="0.8"/>
<text x="616.80" y="375.58" font-size="7.5" fill="#444" text-anchor="end" textLength="13.13" lengthAdjust="spacingAndGlyphs" >30M</text>
<line x1="621" y1="349.6" x2="929" y2="349.6" stroke="#eee" stroke-width="0.8"/>
<text x="616.80" y="352.24" font-size="7.5" fill="#444" text-anchor="end" textLength="13.13" lengthAdjust="spacingAndGlyphs" >40M</text>
<line x1="621" y1="326.3" x2="929" y2="326.3" stroke="#eee" stroke-width="0.8"/>
<text x="616.80" y="328.90" font-size="7.5" fill="#444" text-anchor="end" textLength="13.13" lengthAdjust="spacingAndGlyphs" >50M</text>
<line x1="621" y1="443.0" x2="929" y2="443.0" stroke="#999" stroke-width="1.2"/>
<clipPath id="xc5"><rect x="569" y="444" width="433" height="24"/></clipPath>
<rect x="622.20" y="347.77" width="8.8" height="95.23" fill="#1f77b4"/>
<rect x="631.00" y="331.43" width="8.8" height="111.57" fill="#ff7f0e"/>
<g transform="translate(628.20,349.77) rotate(-90)">
<text x="0.00" y="0.00" font-size="4.4" fill="#fff" font-weight="bold" text-anchor="end" textLength="20.92" lengthAdjust="spacingAndGlyphs" >40,832,248</text>
</g>
<g transform="translate(633.80,333.43) rotate(90)">
<text x="0.00" y="0.00" font-size="4.4" fill="#7a4a18" textLength="20.92" lengthAdjust="spacingAndGlyphs" >47,767,308</text>
</g>
<g clip-path="url(#xc5)"><g transform="translate(632.4,447.3) rotate(30)">
<text x="0.00" y="5.40" font-size="7.5" fill="#444" textLength="33.03" lengthAdjust="spacingAndGlyphs" >Lee Hogan</text>
</g></g>
<rect x="644.35" y="393.29" width="8.8" height="49.71" fill="#1f77b4"/>
<rect x="653.15" y="375.31" width="8.8" height="67.69" fill="#ff7f0e"/>
<g transform="translate(650.35,395.29) rotate(-90)">
<text x="0.00" y="0.00" font-size="4.4" fill="#fff" font-weight="bold" text-anchor="end" textLength="20.92" lengthAdjust="spacingAndGlyphs" >21,345,380</text>
</g>
<g transform="translate(655.95,377.31) rotate(90)">
<text x="0.00" y="0.00" font-size="4.4" fill="#7a4a18" textLength="20.92" lengthAdjust="spacingAndGlyphs" >29,036,342</text>
</g>
<g clip-path="url(#xc5)"><g transform="translate(654.5,447.3) rotate(30)">
<text x="0.00" y="5.40" font-size="7.5" fill="#444" textLength="42.78" lengthAdjust="spacingAndGlyphs" >Cathy Hughes</text>
</g></g>
<rect x="666.50" y="413.36" width="8.8" height="29.64" fill="#1f77b4"/>
<rect x="675.30" y="379.75" width="8.8" height="63.25" fill="#ff7f0e"/>
<g transform="translate(672.50,415.36) rotate(-90)">
<text x="0.00" y="0.00" font-size="4.4" fill="#fff" font-weight="bold" text-anchor="end" textLength="20.92" lengthAdjust="spacingAndGlyphs" >12,751,468</text>
</g>
<g transform="translate(678.10,381.75) rotate(90)">
<text x="0.00" y="0.00" font-size="4.4" fill="#7a4a18" textLength="20.92" lengthAdjust="spacingAndGlyphs" >27,071,557</text>
</g>
<g clip-path="url(#xc5)"><g transform="translate(676.7,447.3) rotate(30)">
<text x="0.00" y="5.40" font-size="7.5" fill="#444" textLength="36.02" lengthAdjust="spacingAndGlyphs" >Ed Martinez</text>
</g></g>
<rect x="688.65" y="417.79" width="8.8" height="25.21" fill="#1f77b4"/>
<rect x="697.45" y="407.06" width="8.8" height="35.94" fill="#ff7f0e"/>
<g transform="translate(694.65,419.79) rotate(-90)">
<text x="0.00" y="0.00" font-size="4.4" fill="#fff" font-weight="bold" text-anchor="end" textLength="20.92" lengthAdjust="spacingAndGlyphs" >10,835,423</text>
</g>
<g transform="translate(700.25,409.06) rotate(90)">
<text x="0.00" y="0.00" font-size="4.4" fill="#7a4a18" textLength="20.92" lengthAdjust="spacingAndGlyphs" >15,404,375</text>
</g>
<g clip-path="url(#xc5)"><g transform="translate(698.9,447.3) rotate(30)">
<text x="0.00" y="5.40" font-size="7.5" fill="#444" textLength="40.88" lengthAdjust="spacingAndGlyphs" >Derek Murray</text>
</g></g>
<rect x="710.80" y="431.33" width="8.8" height="11.67" fill="#1f77b4"/>
<rect x="719.60" y="429.46" width="8.8" height="13.54" fill="#ff7f0e"/>
<g transform="translate(716.80,432.33) rotate(-90)">
<text x="0.00" y="0.00" font-size="3.6" fill="#fff" font-weight="bold" text-anchor="end" >5,012</text>
</g>
<g transform="translate(722.40,430.46) rotate(90)">
<text x="0.00" y="0.00" font-size="3.6" fill="#7a4a18" >5,814,</text>
</g>
<g clip-path="url(#xc5)"><g transform="translate(721.0,447.3) rotate(30)">
<text x="0.00" y="5.40" font-size="7.5" fill="#444" textLength="24.76" lengthAdjust="spacingAndGlyphs" >Kim Lee</text>
</g></g>
<rect x="732.95" y="433.43" width="8.8" height="9.57" fill="#1f77b4"/>
<rect x="741.75" y="416.86" width="8.8" height="26.14" fill="#ff7f0e"/>
<g transform="translate(738.95,434.43) rotate(-90)">
<text x="0.00" y="0.00" font-size="3.6" fill="#fff" font-weight="bold" text-anchor="end" >4,107</text>
</g>
<g transform="translate(744.55,418.86) rotate(90)">
<text x="0.00" y="0.00" font-size="4.4" fill="#7a4a18" textLength="20.61" lengthAdjust="spacingAndGlyphs" >11,205,197</text>
</g>
<g clip-path="url(#xc5)"><g transform="translate(743.1,447.3) rotate(30)">
<text x="0.00" y="5.40" font-size="7.5" fill="#444" textLength="32.64" lengthAdjust="spacingAndGlyphs" >Dan Barret</text>
</g></g>
<rect x="755.10" y="436.93" width="8.8" height="6.07" fill="#1f77b4"/>
<rect x="763.90" y="432.26" width="8.8" height="10.74" fill="#ff7f0e"/>
<g transform="translate(761.10,437.93) rotate(-90)">
<text x="0.00" y="0.00" font-size="3.6" fill="#fff" font-weight="bold" text-anchor="end" >2,641</text>
</g>
<g transform="translate(766.70,433.26) rotate(90)">
<text x="0.00" y="0.00" font-size="3.6" fill="#7a4a18" >4,617,</text>
</g>
<g clip-path="url(#xc5)"><g transform="translate(765.3,447.3) rotate(30)">
<text x="0.00" y="5.40" font-size="7.5" fill="#444" textLength="35.65" lengthAdjust="spacingAndGlyphs" >Ken Dryden</text>
</g></g>
<rect x="777.25" y="437.17" width="8.8" height="5.83" fill="#1f77b4"/>
<rect x="786.05" y="434.13" width="8.8" height="8.87" fill="#ff7f0e"/>
<g transform="translate(783.25,438.17) rotate(-90)">
<text x="0.00" y="0.00" font-size="3.6" fill="#fff" font-weight="bold" text-anchor="end" >2,480</text>
</g>
<g transform="translate(788.85,435.13) rotate(90)">
<text x="0.00" y="0.00" font-size="3.6" fill="#7a4a18" >3,801,</text>
</g>
<g clip-path="url(#xc5)"><g transform="translate(787.4,447.3) rotate(30)">
<text x="0.00" y="5.40" font-size="7.5" fill="#444" textLength="37.89" lengthAdjust="spacingAndGlyphs" >Rajeev Mitra</text>
</g></g>
<rect x="799.40" y="437.87" width="8.8" height="5.13" fill="#1f77b4"/>
<rect x="808.20" y="417.79" width="8.8" height="25.21" fill="#ff7f0e"/>
<g transform="translate(805.40,438.87) rotate(-90)">
<text x="0.00" y="0.00" font-size="3.6" fill="#fff" font-weight="bold" text-anchor="end" >2,191</text>
</g>
<g transform="translate(811.00,419.79) rotate(90)">
<text x="0.00" y="0.00" font-size="4.4" fill="#7a4a18" textLength="20.92" lengthAdjust="spacingAndGlyphs" >10,803,154</text>
</g>
<g clip-path="url(#xc5)"><g transform="translate(809.6,447.3) rotate(30)">
<text x="0.00" y="5.40" font-size="7.5" fill="#444" textLength="54.03" lengthAdjust="spacingAndGlyphs" >Roland Statemark</text>
</g></g>
<rect x="821.55" y="438.80" width="8.8" height="4.20" fill="#1f77b4"/>
<rect x="830.35" y="428.53" width="8.8" height="14.47" fill="#ff7f0e"/>
<g transform="translate(827.55,439.80) rotate(-90)">
<text x="0.00" y="0.00" font-size="3.6" fill="#fff" font-weight="bold" text-anchor="end" >1,781</text>
</g>
<g transform="translate(833.15,429.53) rotate(90)">
<text x="0.00" y="0.00" font-size="3.6" fill="#7a4a18" >6,214,</text>
</g>
<g clip-path="url(#xc5)"><g transform="translate(831.8,447.3) rotate(30)">
<text x="0.00" y="5.40" font-size="7.5" fill="#444" textLength="46.15" lengthAdjust="spacingAndGlyphs" >Georgine Ekels</text>
</g></g>
<rect x="843.70" y="442.77" width="8.8" height="0.23" fill="#1f77b4"/>
<rect x="852.50" y="439.97" width="8.8" height="3.03" fill="#ff7f0e"/>
<rect x="850.5" y="436.47" width="9" height="1" fill="#ccc"/>
<g clip-path="url(#xc5)"><g transform="translate(853.9,447.3) rotate(30)">
<text x="0.00" y="5.40" font-size="7.5" fill="#444" textLength="49.91" lengthAdjust="spacingAndGlyphs" >Barb Hutchinson</text>
</g></g>
<rect x="865.85" y="442.93" width="8.8" height="0.07" fill="#1f77b4"/>
<rect x="874.65" y="442.77" width="8.8" height="0.23" fill="#ff7f0e"/>
<rect x="872.65" y="439.27" width="9" height="1" fill="#ccc"/>
<g clip-path="url(#xc5)"><g transform="translate(876.0,447.3) rotate(30)">
<text x="0.00" y="5.40" font-size="7.5" fill="#444" textLength="40.14" lengthAdjust="spacingAndGlyphs" >Hans Stichler</text>
</g></g>
<rect x="888.00" y="443.00" width="8.8" height="0.00" fill="#1f77b4"/>
<rect x="896.80" y="434.60" width="8.8" height="8.40" fill="#ff7f0e"/>
<g transform="translate(899.60,435.60) rotate(90)">
<text x="0.00" y="0.00" font-size="3.6" fill="#7a4a18" >3,612,</text>
</g>
<g clip-path="url(#xc5)"><g transform="translate(898.2,447.3) rotate(30)">
<text x="0.00" y="5.40" font-size="7.5" fill="#444" textLength="36.90" lengthAdjust="spacingAndGlyphs" >Linda Walsh</text>
</g></g>
<rect x="910.15" y="442.93" width="8.8" height="0.07" fill="#1f77b4"/>
<rect x="918.95" y="442.65" width="8.8" height="0.35" fill="#ff7f0e"/>
<rect x="916.95" y="439.15" width="9" height="1" fill="#ccc"/>
<g clip-path="url(#xc5)"><g transform="translate(920.4,447.3) rotate(30)">
<text x="0.00" y="5.40" font-size="7.5" fill="#444" textLength="51.78" lengthAdjust="spacingAndGlyphs" >Christian Deveau</text>
</g></g>
<line x1="631.4" y1="372.9" x2="917.7" y2="372.9" stroke="#111" stroke-width="1.3" stroke-dasharray="5.2 3.4"/>
<rect x="943.3" y="330.1" width="6.8" height="6.8" fill="#1f77b4" />
<text x="957.30" y="335.90" font-size="7.5" fill="#444" textLength="19.20" lengthAdjust="spacingAndGlyphs" >Actual</text>
<rect x="943.3" y="340.4" width="6.8" height="6.8" fill="#ff7f0e" />
<text x="957.30" y="345.90" font-size="7.5" fill="#444" textLength="27.00" lengthAdjust="spacingAndGlyphs" >Potential</text>
<line x1="938.1999999999999" y1="354.4" x2="953.1999999999999" y2="354.4" stroke="#333" stroke-width="1.4" stroke-dasharray="5.1 4.8"/>
<text x="957.30" y="356.40" font-size="7.5" fill="#444" textLength="14.00" lengthAdjust="spacingAndGlyphs" >Goal</text>
<rect x="239" y="488" width="287.5" height="52" rx="3" fill="#fff" stroke="#efefef" stroke-width="1.9"/>
<text x="248.20" y="511.90" font-size="13" fill="#333" textLength="66.00" lengthAdjust="spacingAndGlyphs" >Sales Funnel</text>
<polygon points="516.00,507.30 512.85,512.28 506.55,512.28 503.40,507.30 506.55,502.32 512.85,502.32" fill="none" stroke="#959595" stroke-width="1.05"/>
<circle cx="509.7" cy="507.3" r="2.6" fill="none" stroke="#959595" stroke-width="1.05"/>
<rect x="531.4" y="488" width="360.9" height="52" rx="3" fill="#fff" stroke="#efefef" stroke-width="1.9"/>
<text x="541.10" y="511.90" font-size="13" fill="#333" textLength="105.00" lengthAdjust="spacingAndGlyphs" >Time Spent by Type</text>
<polygon points="881.60,507.30 878.45,512.28 872.15,512.28 869.00,507.30 872.15,502.32 878.45,502.32" fill="none" stroke="#959595" stroke-width="1.05"/>
<circle cx="875.3" cy="507.3" r="2.6" fill="none" stroke="#959595" stroke-width="1.05"/>
<rect x="0" y="510.4" width="1024" height="12.6" fill="#033977" />
<rect x="0" y="523" width="1024" height="1" fill="#7d93b5" />
<text x="-1.00" y="519.60" font-size="6.4" fill="#fff" textLength="141.00" lengthAdjust="spacingAndGlyphs" stroke="#fff" stroke-width="0.3">Copyright © 2022 Infor. All rights reserved. www.infor.com</text>
<text x="764.70" y="519.60" font-size="6.4" fill="#fff" textLength="43.60" lengthAdjust="spacingAndGlyphs" stroke="#fff" stroke-width="0.3">Roland Statemark</text>
<text x="812.00" y="519.60" font-size="6.4" fill="#fff" textLength="70.00" lengthAdjust="spacingAndGlyphs" stroke="#fff" stroke-width="0.3">Monday, September 12, 2022</text>
<text x="897.00" y="519.60" font-size="6.4" fill="#fff" textLength="96.00" lengthAdjust="spacingAndGlyphs" stroke="#fff" stroke-width="0.3">(UTC-08:00) Pacific Time (US &amp; Canada)</text>
<rect x="995.2" y="511" width="0.8" height="12" fill="#d0d8e6" />
<rect x="1022.8" y="511" width="1.2" height="12" fill="#9aa8c0" />
<text x="1000.00" y="520.00" font-size="6.8" fill="#fff" font-weight="bold" textLength="19.50" lengthAdjust="spacingAndGlyphs" >Sign Off</text>
</svg></body></html>
